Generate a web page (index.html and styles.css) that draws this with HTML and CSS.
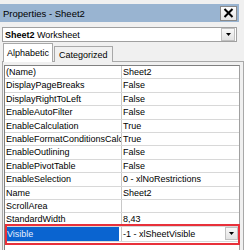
FILE: index.html
```html
<!DOCTYPE html>
<html>
<head>
<meta charset="utf-8">
<link rel="stylesheet" href="styles.css">
</head>
<body>
<div class="win">
  <div class="titlebar">
    <span class="title">Properties - Sheet2</span>
    <span class="close"><svg width="11" height="10" viewBox="0 0 11 10"><path d="M1.5 1 L9.5 9 M9.5 1 L1.5 9" stroke="#000" stroke-width="2"/></svg></span>
  </div>
  <div class="combo">
    <span class="combo-text"><b>Sheet2</b> Worksheet</span>
    <span class="drop"><svg width="5" height="3" viewBox="0 0 5 3"><path d="M0 0 H5 L2.5 3 Z" fill="#000"/></svg></span>
  </div>
  <div class="tabs">
    <span class="tab active">Alphabetic</span>
    <span class="tab">Categorized</span>
  </div>
  <div class="page">
    <div class="grid">
      <div class="row"><span class="k">(Name)</span><span class="v">Sheet2</span></div>
      <div class="row"><span class="k">DisplayPageBreaks</span><span class="v">False</span></div>
      <div class="row"><span class="k">DisplayRightToLeft</span><span class="v">False</span></div>
      <div class="row"><span class="k">EnableAutoFilter</span><span class="v">False</span></div>
      <div class="row"><span class="k">EnableCalculation</span><span class="v">True</span></div>
      <div class="row"><span class="k">EnableFormatConditionsCalc</span><span class="v">True</span></div>
      <div class="row"><span class="k">EnableOutlining</span><span class="v">False</span></div>
      <div class="row"><span class="k">EnablePivotTable</span><span class="v">False</span></div>
      <div class="row"><span class="k">EnableSelection</span><span class="v">0 - xlNoRestrictions</span></div>
      <div class="row"><span class="k">Name</span><span class="v">Sheet2</span></div>
      <div class="row"><span class="k">ScrollArea</span><span class="v"></span></div>
      <div class="row"><span class="k">StandardWidth</span><span class="v">8,43</span></div>
      <div class="row sel"><span class="k"><span class="hl">Visible</span></span><span class="v edit">-1 - xlSheetVisible<span class="drop small"><svg width="5" height="3" viewBox="0 0 5 3"><path d="M0 0 H5 L2.5 3 Z" fill="#000"/></svg></span></span>
        <div class="mark"></div>
      </div>
    </div>
  </div>
</div>
</body>
</html>
```
FILE: styles.css
```css
html, body {
  margin: 0;
  padding: 0;
  background: #f0f0f0;
  overflow: hidden;
}
body {
  font-family: "Liberation Sans", Arial, sans-serif;
  color: #000;
  width: 244px;
  height: 250px;
}
.win {
  padding-top: 4px;
}
.titlebar {
  height: 18px;
  margin-right: 5px;
  background: #99b4d1;
  display: flex;
  align-items: center;
  justify-content: space-between;
  padding-left: 3px;
  padding-right: 2px;
}
.title {
  font-size: 9.5px;
}
.close {
  width: 15px;
  height: 13px;
  border: 1px solid #8a8a8a;
  background: linear-gradient(#fdfdfd, #e6e6e6);
  display: flex;
  align-items: center;
  justify-content: center;
}
.combo {
  margin: 5px 7px 0 2px;
  height: 13px;
  border: 1px solid #a0a0a0;
  background: #fff;
  display: flex;
  align-items: center;
  justify-content: space-between;
  padding-left: 2px;
  font-size: 9px;
}
.combo-text b {
  font-weight: bold;
}
.drop {
  width: 12px;
  height: 11px;
  margin-right: 1px;
  border: 1px solid #c0c0c0;
  background: linear-gradient(#f8f8f8, #e2e2e2);
  display: flex;
  align-items: center;
  justify-content: center;
}
.tabs {
  margin-top: 2px;
  margin-left: 3px;
  display: flex;
  align-items: flex-end;
  height: 18px;
  position: relative;
  z-index: 1;
  font-size: 9px;
}
.tab {
  height: 15px;
  padding: 0 4px;
  border: 1px solid #a8a8a8;
  border-bottom: none;
  background: #f0f0f0;
  display: flex;
  align-items: center;
  margin-left: 1px;
}
.tab.active {
  height: 18px;
  background: #fff;
  margin-left: 0;
  padding: 0 3px;
}
.page {
  margin-left: 2px;
  width: 236px;
  height: 186px;
  margin-top: -1px;
  border: 1px solid #a8a8a8;
  border-bottom: none;
  background: #f0f0f0;
  padding: 3px 3px 0 1px;
  overflow: hidden;
}
.grid {
  border-left: 1px solid #808080;
  border-top: 1px solid #808080;
  border-right: 1px solid #a0a0a0;
  background: #fff;
  font-size: 9px;
  height: 200px;
}
.row {
  display: grid;
  grid-template-columns: 117px 1fr;
  height: 12.4px;
  border-bottom: 1px solid #d8d8d8;
  position: relative;
}
.k {
  padding-left: 1px;
  border-right: 1px solid #c8c8c8;
  white-space: nowrap;
  overflow: hidden;
  line-height: 12.4px;
  display: flex;
}
.v {
  padding-left: 1px;
  white-space: nowrap;
  overflow: hidden;
  line-height: 12.4px;
}
.row.sel {
  height: 14px;
}
.row.sel .k,
.row.sel .v {
  line-height: 14px;
}
.hl {
  background: #0a64d0;
  color: #e6eefc;
  flex: 1;
  margin: 0 2px 0 1px;
  padding-left: 0;
}
.v.edit {
  display: flex;
  align-items: center;
  justify-content: space-between;
}
.drop.small {
  width: 11px;
  height: 11px;
  margin-right: 1px;
}
.mark {
  position: absolute;
  left: 0;
  right: -1px;
  top: -3px;
  bottom: -4px;
  border: 2px solid #e8303a;
  pointer-events: none;
}
```
